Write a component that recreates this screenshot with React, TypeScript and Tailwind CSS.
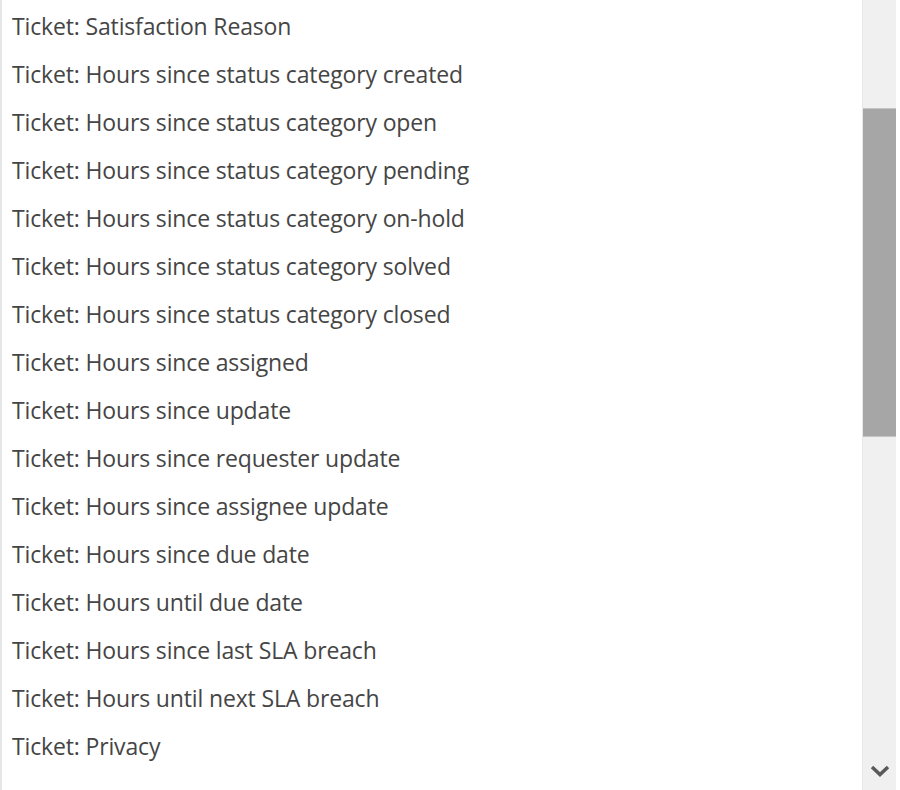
const items = [
  "Ticket: Satisfaction Reason",
  "Ticket: Hours since status category created",
  "Ticket: Hours since status category open",
  "Ticket: Hours since status category pending",
  "Ticket: Hours since status category on-hold",
  "Ticket: Hours since status category solved",
  "Ticket: Hours since status category closed",
  "Ticket: Hours since assigned",
  "Ticket: Hours since update",
  "Ticket: Hours since requester update",
  "Ticket: Hours since assignee update",
  "Ticket: Hours since due date",
  "Ticket: Hours until due date",
  "Ticket: Hours since last SLA breach",
  "Ticket: Hours until next SLA breach",
  "Ticket: Privacy",
];

export default function App() {
  return (
    <div className="w-[900px] h-[790px] flex bg-white overflow-hidden">
      <div className="flex-1 border-l-2 border-[#e6e6e6] pt-[2px] font-['Open_Sans',sans-serif] text-[23px] text-[#454545] tracking-[-0.15px]">
        {items.map((item) => (
          <div key={item} className="h-12 flex items-center pl-[10px] whitespace-nowrap">
            {item}
          </div>
        ))}
      </div>
      <div className="w-[34px] h-full bg-[#f0f0f0] border-l border-[#e8e8e8] flex flex-col">
        <div className="mt-[108px] h-[329px] bg-[#a6a6a6] border-t border-b border-[#c4c4c4]"></div>
        <div className="mt-auto mb-[12px] flex justify-center">
          <svg width="20" height="14" viewBox="0 0 20 14">
            <path d="M2 3 L10 10.5 L18 3" fill="none" stroke="#5a5a5a" strokeWidth="3.5" />
          </svg>
        </div>
      </div>
      <div className="w-[4px] h-full bg-white"></div>
    </div>
  );
}
